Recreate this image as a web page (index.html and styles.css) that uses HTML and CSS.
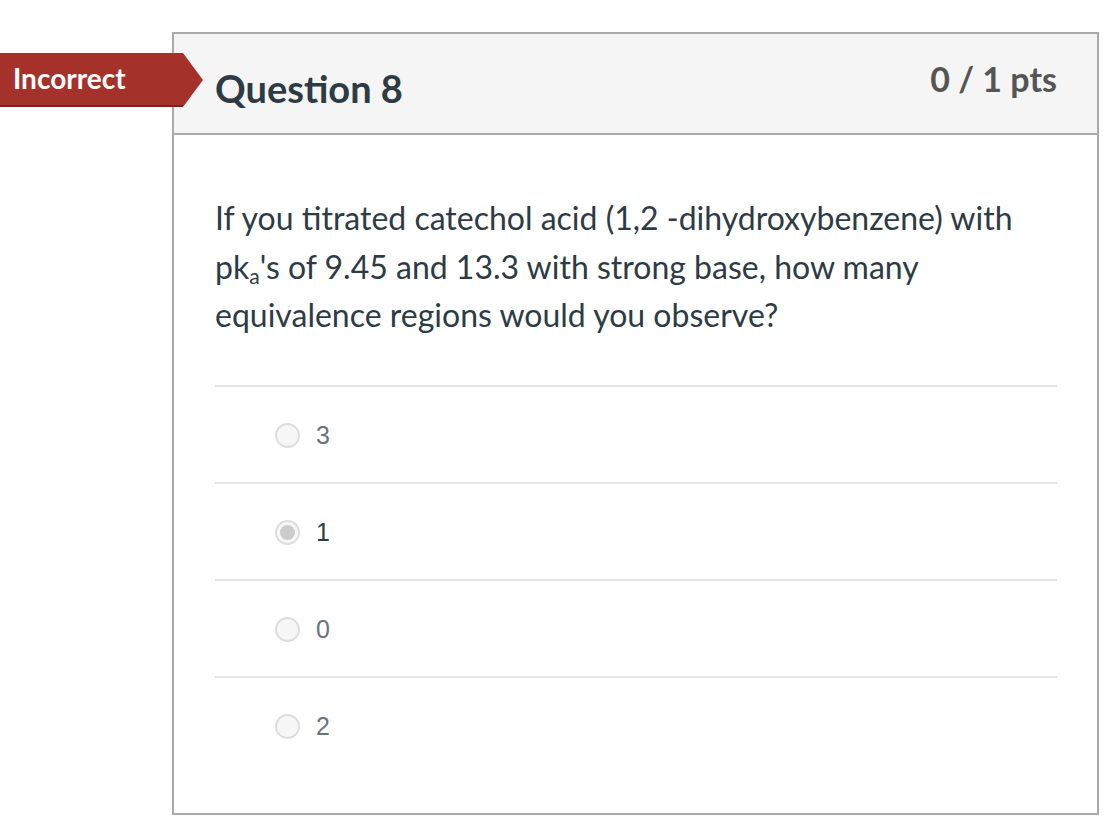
FILE: index.html
```html
<!DOCTYPE html>
<html lang="en">
<head>
<meta charset="utf-8">
<title>Question 8</title>
<link rel="stylesheet" href="styles.css">
</head>
<body>
<div class="page">
  <div class="badge"><span class="badge-text">Incorrect</span></div>
  <div class="card">
    <div class="card-header">
      <h2 class="q-title">Question 8</h2>
      <div class="q-points">0 / 1 pts</div>
    </div>
    <div class="card-body">
      <p class="q-text">If you titrated catechol acid (1,2 -dihydroxybenzene) with pk<sub>a</sub>'s of 9.45 and 13.3 with strong base, how many equivalence regions would you observe?</p>
      <div class="answers">
        <div class="answer"><span class="radio"></span><span class="answer-text">3</span></div>
        <div class="answer selected"><span class="radio"></span><span class="answer-text">1</span></div>
        <div class="answer"><span class="radio"></span><span class="answer-text">0</span></div>
        <div class="answer last"><span class="radio"></span><span class="answer-text">2</span></div>
      </div>
    </div>
  </div>
</div>
</body>
</html>
```
FILE: styles.css
```css
html, body {
  margin: 0;
  padding: 0;
  background: #ffffff;
}
body {
  font-family: Lato, "Open Sans", sans-serif;
  color: #2d3b45;
}
.page {
  position: relative;
  padding: 32px 15px 0 172px;
}
.badge {
  position: absolute;
  left: 0;
  top: 53px;
  width: 183px;
  height: 54px;
  background: #a5322a;
  border-bottom: 2px solid #7d231d;
  box-sizing: border-box;
  display: flex;
  align-items: center;
  z-index: 2;
}
.badge::after {
  content: "";
  position: absolute;
  left: 183px;
  top: 0;
  width: 0;
  height: 0;
  border-top: 27px solid transparent;
  border-bottom: 27px solid transparent;
  border-left: 20px solid #a5322a;
}
.badge-text {
  color: #ffffff;
  font-weight: 700;
  font-size: 28px;
  padding-left: 13px;
  padding-bottom: 2px;
}
.card {
  width: 927px;
  height: 783px;
  box-sizing: border-box;
  border: 2px solid #aaaaaa;
  background: #ffffff;
}
.card-header {
  height: 101px;
  box-sizing: border-box;
  background: #f5f5f5;
  border-bottom: 2px solid #aaaaaa;
  display: flex;
  justify-content: space-between;
  align-items: flex-start;
  padding: 0 40px 0 41px;
}
.q-title {
  margin: 0;
  padding-top: 32px;
  font-size: 38px;
  font-weight: 700;
  line-height: 44px;
  color: #2d3b45;
}
.q-points {
  padding-top: 25px;
  font-size: 34px;
  font-weight: 700;
  line-height: 40px;
  color: #555555;
}
.card-body {
  padding: 0 40px 0 41px;
}
.q-text {
  margin: 59px 0 0;
  font-size: 32px;
  line-height: 48.5px;
  color: #2d3b45;
}
.q-text sub {
  font-size: 21px;
  vertical-align: -5px;
  line-height: 0;
}
.answers {
  margin-top: 45px;
}
.answer {
  height: 97px;
  box-sizing: border-box;
  border-top: 2px solid #e5e5e5;
  display: flex;
  align-items: center;
  padding: 2px 0 0 60px;
}
.radio {
  width: 25px;
  height: 25px;
  box-sizing: border-box;
  border-radius: 50%;
  border: 2px solid #dddddd;
  background: #f7f7f7;
  display: flex;
  align-items: center;
  justify-content: center;
}
.selected .radio::after {
  content: "";
  width: 15px;
  height: 15px;
  border-radius: 50%;
  background: #cccccc;
}
.answer-text {
  margin-left: 16px;
  font-family: "Liberation Sans", Arial, sans-serif;
  font-size: 25px;
  color: #68737c;
}
.selected .answer-text {
  color: #2d3b45;
}
```
